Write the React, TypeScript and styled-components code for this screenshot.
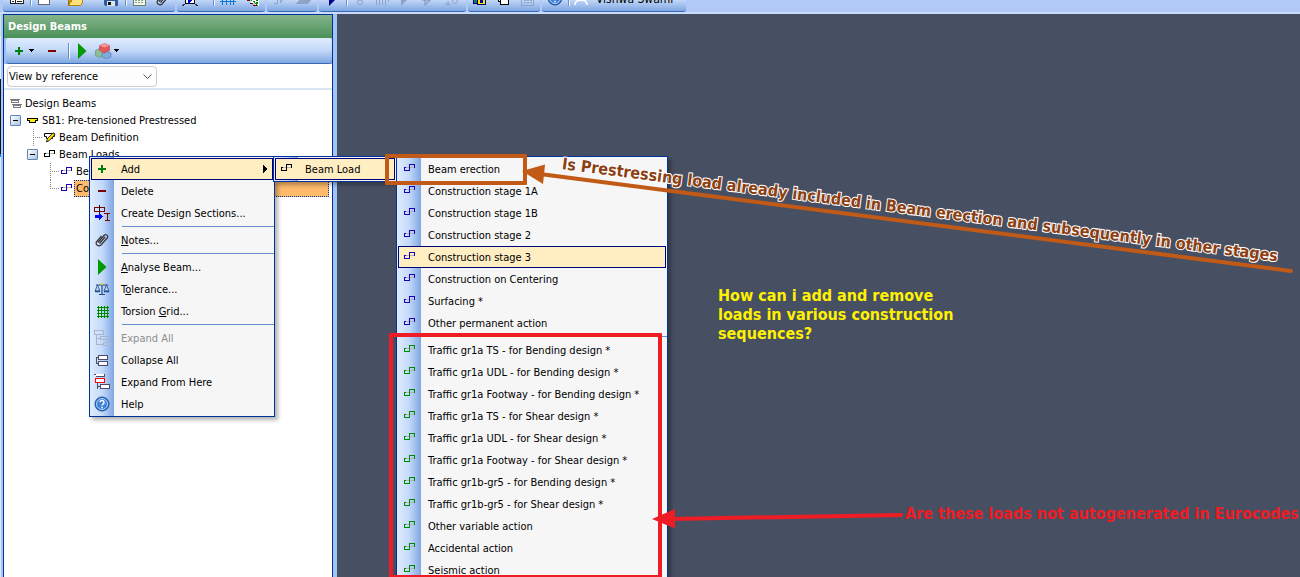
import React from "react";
import styled, { createGlobalStyle, css } from "styled-components";

const Global = createGlobalStyle`
  * { box-sizing: border-box; }
  body { margin: 0; }
  body, button, select {
    font-family: "DejaVu Sans Condensed", "DejaVu Sans", "Noto Sans", sans-serif;
    font-stretch: condensed;
    font-size: 11px;
    color: #000;
  }
  svg { display: block; flex: none; }
`;

const navy = "#00007f";
const frame = "#003399";
const orange = "#c05a16";
const red = "#ee1c24";

/* ---------- shell ---------- */

const Shell = styled.div`
  position: relative;
  display: flex;
  flex-direction: column;
  height: 100vh;
  overflow: hidden;
  background: #474f62;
`;

const TopBar = styled.header`
  display: flex;
  align-items: flex-end;
  gap: 2px;
  flex: none;
  height: 14px;
  padding: 0 3px 2px;
  overflow: hidden;
  background: linear-gradient(#b0c9f7 12px, #c9dcfb 12px);
`;

const ToolGroup = styled.div`
  display: flex;
  flex: none;
  height: 26px;
  padding-bottom: 5px;
  align-items: flex-end;
  border-bottom: 1px solid #3b68b5;
  border-radius: 0 0 3px 3px;
  background: linear-gradient(#dfecfe, #c2d8f8 55%, #7fa7e2);
`;

const ToolButton = styled.button<{ $w: number }>`
  display: flex;
  justify-content: center;
  align-items: flex-end;
  width: ${(p) => p.$w}px;
  padding: 0;
  border: 0;
  background: none;
`;

const Divider = styled.span<{ $h: number }>`
  width: 2px;
  height: ${(p) => p.$h}px;
  border-left: 1px solid #6a8ccb;
  border-right: 1px solid #f4f8ff;
`;

const UserName = styled.span`
  font-size: 12px;
  line-height: 14px;
  padding: 0 13px 0 4px;
`;

const Body = styled.div`
  display: flex;
  flex: 1;
  min-height: 0;
`;

const EdgeStrip = styled.div`
  flex: none;
  width: 3px;
  background:
    linear-gradient(#cfe6cf 22px, #e6efe6 22px 65px, #111 65px 140px, #1a6fff 140px 143px, #dce8fb 143px)
      0 0 / 1px 100% no-repeat,
    #a9c6f7;
`;

const Panel = styled.section`
  display: flex;
  flex-direction: column;
  flex: none;
  width: 330px;
  border: solid ${frame};
  border-width: 1px 1px 0;
  background: #fff;
`;

const Splitter = styled.div`
  flex: none;
  width: 4px;
  background: #a3c2f5;
`;

const Workspace = styled.main`
  flex: 1;
  background: #474f62;
`;

const PanelTitle = styled.h1`
  margin: 0;
  padding: 0 4px;
  font-size: 11px;
  line-height: 23px;
  color: #fff;
  background: linear-gradient(#86b48b, #4a9059);
`;

const PanelTools = styled.div`
  display: flex;
  align-items: center;
  height: 26px;
  padding-left: 2px;
  background: #9dbef5;
`;

const PanelToolsInner = styled.div`
  display: flex;
  align-items: center;
  flex: 1;
  height: 26px;
  padding-left: 5px;
  gap: 8px;
  border-bottom: 1px solid #3b68b5;
  border-radius: 3px;
  background: linear-gradient(#dfecfe, #c2d8f8 50%, #7fa7e2);
`;

const PanelButton = styled.button<{ $drop?: boolean }>`
  display: flex;
  align-items: center;
  gap: 2px;
  height: 22px;
  padding: 0 ${(p) => (p.$drop ? 2 : 0)}px 0 0;
  border: 0;
  background: none;
`;

const IconCell = styled.span`
  display: flex;
  justify-content: center;
  width: 16px;
`;

const ViewRow = styled.div`
  display: flex;
  height: 26px;
  padding: 2px 3px;
  border-bottom: 2px solid #d9e6f4;
`;

const SelectBox = styled.div`
  position: relative;
  width: 150px;
  svg { position: absolute; right: 5px; top: 8px; pointer-events: none; }
`;

const Select = styled.select`
  appearance: none;
  width: 100%;
  height: 21px;
  padding: 0 1px 1px;
  border: 1px solid #ccc;
  border-radius: 4px;
  background: #fdfdfd;
`;

/* ---------- tree ---------- */

const Tree = styled.ul`
  margin: 0;
  padding: 5px 0 0;
  list-style: none;
`;

const TreeRow = styled.li<{ $level: number }>`
  display: flex;
  align-items: center;
  height: 17px;
  padding: 0 3px 0 ${(p) => p.$level * 17 + 4}px;
`;

const TreeIcon = styled.span`
  display: flex;
  justify-content: center;
  width: 15px;
`;

const Branch = styled.span<{ $kind: "tee" | "end" | "box" }>`
  position: relative;
  display: flex;
  align-items: center;
  justify-content: center;
  width: 17px;
  height: 17px;
  ${(p) =>
    p.$kind !== "box" &&
    css`
      &::before {
        content: "";
        position: absolute;
        left: 8px;
        top: 0;
        height: ${p.$kind === "tee" ? 17 : 9}px;
        border-left: 1px dotted #888;
      }
      &::after {
        content: "";
        position: absolute;
        left: 8px;
        right: 0;
        top: 8px;
        border-top: 1px dotted #888;
      }
    `}
`;

const Expander = styled.button`
  display: flex;
  align-items: center;
  justify-content: center;
  width: 11px;
  height: 11px;
  padding: 0;
  margin-right: 2px;
  border: 1px solid #5f86b3;
  border-radius: 1px;
  background: linear-gradient(135deg, #fff, #a9c4e2);
`;

const TreeLabel = styled.span<{ $selected?: boolean }>`
  padding: 0 1px;
  line-height: 15px;
  white-space: nowrap;
  border: 1px solid transparent;
  ${(p) =>
    p.$selected &&
    css`
      flex: 1;
      border: 1px dotted #003399;
      background: #ffbb6b;
    `}
`;

/* ---------- menus ---------- */

const Menu = styled.div<{ $x: number; $y: number; $w: number }>`
  position: absolute;
  left: ${(p) => p.$x}px;
  top: ${(p) => p.$y}px;
  width: ${(p) => p.$w}px;
  padding: 1px;
  border: 1px solid ${frame};
  background: linear-gradient(90deg, #dfecfd, #c4dafa 50%, #7fa6e3) 0 0 / 24px 100% no-repeat #f6f6f6;
  box-shadow: 3px 3px 4px rgba(0, 0, 0, 0.3);
`;

const MenuItem = styled.button<{ $active?: boolean }>`
  display: flex;
  align-items: center;
  width: 100%;
  height: 22px;
  padding: 0 4px 0 2px;
  border: 1px solid ${(p) => (p.$active ? navy : "transparent")};
  background: ${(p) => (p.$active ? "#ffeec2" : "none")};
  text-align: left;
  white-space: nowrap;
  &:disabled { color: #8d8d8d; }
`;

const MenuIcon = styled.span`
  display: flex;
  align-items: center;
  justify-content: center;
  width: 16px;
  height: 20px;
  margin-right: 11px;
`;

const MenuText = styled.span`
  flex: 1;
`;

const Rule = styled.div`
  height: 5px;
  padding: 2px 0;
  margin: 0 -1px 0 31px;
  background: #6a8ccb content-box;
`;

/* ---------- annotations ---------- */

const Frame = styled.div<{ $x: number; $y: number; $w: number; $h: number; $c: string }>`
  position: absolute;
  left: ${(p) => p.$x}px;
  top: ${(p) => p.$y}px;
  width: ${(p) => p.$w}px;
  height: ${(p) => p.$h}px;
  border: 4px solid ${(p) => p.$c};
  border-radius: 1px;
`;

const Ink = styled.svg`
  position: absolute;
  left: 0;
  top: 0;
  pointer-events: none;
`;

const Note = styled.p<{ $x: number; $y: number; $c: string }>`
  position: absolute;
  left: ${(p) => p.$x}px;
  top: ${(p) => p.$y}px;
  margin: 0;
  font-weight: bold;
  font-size: 16px;
  line-height: 19px;
  white-space: pre;
  color: ${(p) => p.$c};
`;

const SlantedNote = styled(Note)`
  transform-origin: 0 100%;
  transform: rotate(7.36deg);
  -webkit-text-stroke: 2px #fff;
  paint-order: stroke fill;
`;

/* ---------- icons ---------- */

const Px = ({ w = 16, h = 16, children }: { w?: number; h?: number; children: React.ReactNode }) => (
  <svg width={w} height={h} viewBox={`0 0 ${w} ${h}`} shapeRendering="crispEdges" fill="none" aria-hidden="true">
    {children}
  </svg>
);

const Step = ({ c }: { c: string }) => (
  <Px w={11} h={10}>
    <path d="M1 3.5h9" stroke="#b4b4b4" />
    <path d="M.5 3v3.5h5V.5h5V4M0 3.5h2" stroke={c} />
  </Px>
);
const Plus = () => (
  <Px w={10} h={10}>
    <path d="M1 5h8M5 1v8" stroke="#007f0e" strokeWidth="2" />
  </Px>
);
const Minus = () => (
  <Px w={10} h={10}>
    <path d="M1 5h8" stroke="#7f0000" strokeWidth="2" />
  </Px>
);
const Dash = () => (
  <Px w={5} h={1}>
    <path d="M0 0h5v1h-5z" fill="#000" />
  </Px>
);
const Play = () => (
  <svg width="9" height="16" viewBox="0 0 9 16" aria-hidden="true">
    <path d="M0 0L8.500 8L0 16z" fill="#009a00" />
  </svg>
);
const Caret = () => (
  <Px w={5} h={3}>
    <path d="M0 0h5v1h-1v1h-1v1h-1v-1h-1v-1h-1z" fill="#000" />
  </Px>
);
const Cubes = () => (
  <svg width="17" height="16" viewBox="0 0 17 16" aria-hidden="true">
    <path d="M.5 7.500l4-2 4 2v5l-4 2-4-2z" fill="#8fbb99" stroke="#5d8a6b" strokeWidth=".6" />
    <path d="M7 10l5-2 4 2v4l-5 2-4-2z" fill="#7fabdb" stroke="#4a77ad" strokeWidth=".6" />
    <path d="M4.500 2.500l5-2 5 2v5l-5 2.500-5-2.500z" fill="#e4575c" stroke="#b8484d" strokeWidth=".6" />
    <path d="M4.500 2.500l5 2 5-2-5-2z" fill="#f59a9a" />
  </svg>
);
const Sections = () => (
  <Px w={16} h={17}>
    <path d="M.5 2.500h10v4h-10z" stroke="#7f0000" />
    <path d="M5.500 0v8" stroke="#3a0000" />
    <path d="M1 10h4V8l4 3.500L5 15v-2H1z" fill="#0000ff" />
    <path d="M10 8.500h6M11 15.500h5M13.500 8v8" stroke="#7f0000" />
  </Px>
);
const Clip = () => (
  <svg width="14" height="14" viewBox="0 0 14 14" fill="none" stroke="#333" strokeWidth="1.200" aria-hidden="true">
    <path d="M3 9.500L9 2.500a2 2 0 0 1 3.200 2.500L6 12a2.800 2.800 0 0 1-4.500-3.200L6.500 3M4.500 10.500L10 4" />
  </svg>
);
const Scales = () => (
  <svg width="16" height="14" viewBox="0 0 16 14" fill="none" stroke="#1d4e89" aria-hidden="true">
    <path d="M2 3h12M8 1v11M5 12.500h6" strokeWidth="1.200" />
    <path d="M3.500 3L1 9h5zM12.500 3L10 9h5z" fill="#b9d3ee" strokeWidth=".8" />
    <path d="M1 9.500h5M10 9.500h5" strokeWidth="1.400" />
    <path d="M7 1h2v2H7z" fill="#e6d400" stroke="none" />
  </svg>
);
const Grid = () => (
  <Px w={13} h={13}>
    <path d="M2.500 1v12M5.500 1v12M8.500 1v12M11.500 1v12M1 2.500h12M1 5.500h12M1 8.500h12M1 11.500h12" stroke="#008a00" />
  </Px>
);
const ExpandAll = () => (
  <Px w={17} h={16}>
    <path d="M.5.5h9v4h-9zM6.500 6.500h8v3h-8zM9.500 12.500h7v3h-7zM2.500 5v10M3 8.500h3M3 14.500h6" stroke="#a7b6cc" />
  </Px>
);
const CollapseAll = () => (
  <Px w={12} h={11}>
    <path d="M2.500.5h9v4h-9zM2.500 6.500h9v4h-9z" fill="#fff" stroke="#4a4a6a" />
    <path d="M.5 2v7M0 2.500h2M0 8.500h2" stroke="#4a4a6a" />
  </Px>
);
const ExpandHere = () => (
  <Px w={16} h={16}>
    <path d="M1 0h10v2h-10z" fill="#fff" />
    <path d="M0 .5h2M1.500 2.500h9V0M3.500 9v6M3 12.500h3" stroke="#4a4a6a" />
    <path d="M1.500 4.500h9v4h-9z" fill="#fff" stroke="#f00" />
    <path d="M6.500 10.500h9v4h-9z" fill="#fff" stroke="#4a4a6a" />
  </Px>
);
const Help = () => (
  <svg width="16" height="16" viewBox="0 0 16 16" aria-hidden="true">
    <circle cx="8" cy="8" r="7" fill="#2f74cc" stroke="#1d4f9c" />
    <circle cx="8" cy="8" r="5.500" fill="#3f83d8" stroke="#d7e8fb" strokeWidth=".8" />
    <path d="M6 6.300a2 2 0 1 1 2.700 2c-.6.300-.7.600-.7 1.200M8 10.800v1.400" fill="none" stroke="#fff" strokeWidth="1.500" />
  </svg>
);
const RootIcon = () => (
  <Px w={12} h={10}>
    <path d="M1.500 1.500h7v2h-7zM3.500 6.500h7v2h-7z" stroke="#7a7a7a" />
    <path d="M0 .5h10M2 5.500h10" stroke="#7a7a7a" />
  </Px>
);
const BeamIcon = () => (
  <Px w={11} h={5}>
    <path d="M.5.5h10v2h-10z" fill="#ffee00" stroke="#000" />
    <path d="M1 1h9v1h-9zM3 2h5v2h-5z" fill="#ffee00" />
    <path d="M2.500 3v1.500h6V3" stroke="#000" />
  </Px>
);
const DefinitionIcon = () => (
  <svg width="12" height="11" viewBox="0 0 12 11" aria-hidden="true">
    <path d="M.5 1.500h10v3h-2v2h-6v-2h-2z" fill="#fff" stroke="#000" />
    <path d="M2.500 10l1-3.500L9 .8l2 1.700-5.500 6z" fill="#ffd800" stroke="#000" strokeWidth=".8" />
  </svg>
);

const TopIcon = ({ name }: { name: string }) => {
  const gray = "#8fa3c4";
  switch (name) {
    case "window":
      return <Px><path d="M1.500 1.500h13v12h-13z" fill="#fff" stroke="#222" /><path d="M6.500 2v12M3 9.500h2M3 11.500h2M8 9.500h5M8 11.500h5" stroke="#222" /></Px>;
    case "new":
      return <Px><path d="M2.500 1.500h11v13h-11z" fill="#fff" stroke="#667" /></Px>;
    case "open":
      return <Px><path d="M.5 14.500V5l5-1 9 2-2 9z" fill="#d39a1c" stroke="#9a6a08" /><path d="M1 15l4-7h11l-3 7z" fill="#ffe27a" stroke="#b58012" /></Px>;
    case "save":
      return <Px><path d="M1 1h14v15h-13l-1-1z" fill="#2c5c99" /><path d="M4 11h8v5h-8z" fill="#dde4ec" /><path d="M5 12h3v3h-3z" fill="#111" /></Px>;
    case "calc":
      return <Px><path d="M2.500 1.500h12v14h-12z" fill="#f1f5ea" stroke="#6d806d" /><path d="M4 8.500h9M4 10.500h9M4 12.500h9" stroke="#8aa88a" strokeDasharray="2 1" /></Px>;
    case "clip":
      return <Clip />;
    case "select":
      return <Px><path d="M3.500 1.500h9v12h-9z" fill="#fff" stroke="#000" /><path d="M6 6l5 4-5 4z" fill="#0000d0" /><path d="M0 15.500h2M14 15.500h2M1 14.500h2M13 14.500h2" stroke="#333" /></Px>;
    case "bridge":
      return <Px><path d="M0 11.500h16M2.500 8v7M6.500 8v7M10.500 8v7M13.500 8v7" stroke="#0a78d0" /></Px>;
    case "check":
      return <Px><path d="M2 10l4 0 0 3 4 0 0 3 4 0V8" fill="#fff" /><path d="M2 10.500h3M5 13.500h3M8 15.500h4" stroke="#800000" /><path d="M6 9l7 6M12 9v6" stroke="#008a00" strokeWidth="2" strokeDasharray="2 1" /></Px>;
    case "flag":
      return <Px><path d="M2.500 5.500h4v8h-4M9.500 13V7h4l-4 6" stroke={gray} /></Px>;
    case "stack":
      return <Px w={18}><path d="M1 14l4-5h12l-4 5zM5 8l2-3h10l-2 3z" fill={gray} /></Px>;
    case "run":
      return <svg width="10" height="16" viewBox="0 0 10 16"><path d="M1 0l8 8-8 8z" fill="#00008b" /></svg>;
    case "ring":
      return <svg width="16" height="16" viewBox="0 0 16 16" fill="none" stroke={gray}><circle cx="8" cy="12" r="2.500" /><path d="M5 10h6" /></svg>;
    case "wave":
      return <Px><path d="M1.500 6v9M4.500 8v7M7.500 8v7M10.500 8v7M13.500 8v4" stroke={gray} /></Px>;
    case "runOff":
      return <svg width="10" height="16" viewBox="0 0 10 16"><path d="M1 0l8 8-8 8z" fill={gray} /></svg>;
    case "pen":
      return <svg width="16" height="16" viewBox="0 0 16 16" fill="none" stroke={gray} strokeWidth="1.500"><path d="M3 10h8l-5 5V9" /></svg>;
    case "link":
      return <svg width="16" height="16" viewBox="0 0 16 16" fill="none" stroke={gray}><path d="M1 14h6M4 11v5" /><circle cx="11" cy="11" r="2.500" /></svg>;
    case "layers":
      return <Px><path d="M1.500 5.500h7v8h-7z" fill="#1a7a5a" stroke="#00007f" /><path d="M5.500 7.500h8v7h-8z" fill="#ffe600" stroke="#00007f" /><path d="M8 10h3v3h-3z" fill="#00a" /></Px>;
    case "windows":
      return <Px><path d="M3.500 4.500h7v7h-7z" fill="#fff" stroke="#000" /><path d="M5.500 7.500h8v7h-8z" fill="#fff" stroke="#000" /><path d="M6 8.500h8" stroke="#000" /></Px>;
    case "table":
      return <Px><path d="M2.500 1.500h12v14h-12z" stroke={gray} /><path d="M5 10.500h8M5 12.500h8" stroke={gray} strokeDasharray="2 1" /></Px>;
    case "help":
      return <Help />;
    default:
      return <svg width="16" height="16" viewBox="0 0 16 16" fill="none" stroke="#fff" strokeWidth="1.500"><circle cx="8" cy="6" r="4" /><path d="M2 15c0-4 3-5 6-5s6 1 6 5" /></svg>;
  }
};

/* ---------- data ---------- */

type Tool = [string, number] | "|";
const toolGroups: Tool[][] = [
  [["window", 27], "|", ["new", 23], ["open", 42], ["save", 28], "|", ["calc", 24], ["clip", 24]],
  [["select", 26], ["", 10], "|", ["bridge", 26], ["check", 24]],
  [["flag", 24], ["stack", 26]],
  [["run", 27], "|", ["ring", 24], ["wave", 22], ["runOff", 22], ["pen", 22], ["link", 28]],
  [["layers", 24], ["windows", 22], ["table", 26]],
  [["help", 26], "|", ["user", 22]],
];

type Entry = { icon?: React.ReactNode; text: React.ReactNode; off?: boolean; on?: boolean; more?: boolean } | "-";

const actions: Entry[] = [
  { icon: <Plus />, text: "Add", on: true, more: true },
  { icon: <Minus />, text: "Delete" },
  { icon: <Sections />, text: "Create Design Sections..." },
  "-",
  { icon: <Clip />, text: <><u>N</u>otes...</> },
  "-",
  { icon: <Play />, text: <><u>A</u>nalyse Beam...</> },
  { icon: <Scales />, text: <>T<u>o</u>lerance...</> },
  { icon: <Grid />, text: <>Torsion <u>G</u>rid...</> },
  "-",
  { icon: <ExpandAll />, text: "Expand All", off: true },
  { icon: <CollapseAll />, text: "Collapse All" },
  { icon: <ExpandHere />, text: "Expand From Here" },
  { icon: <Help />, text: "Help" },
];

const blue = "#1a00b8";
const green = "#008a00";

const stages: Entry[] = [
  ...["Beam erection", "Construction stage 1A", "Construction stage 1B", "Construction stage 2", "Construction stage 3",
    "Construction on Centering", "Surfacing *", "Other permanent action",
  ].map((text) => ({ icon: <Step c={blue} />, text, on: text === "Construction stage 3" })),
  "-",
  ...["Traffic gr1a TS - for Bending design *", "Traffic gr1a UDL - for Bending design *",
    "Traffic gr1a Footway - for Bending design *", "Traffic gr1a TS - for Shear design *",
    "Traffic gr1a UDL - for Shear design *", "Traffic gr1a Footway - for Shear design *",
    "Traffic gr1b-gr5 - for Bending design *", "Traffic gr1b-gr5 - for Shear design *",
    "Other variable action", "Accidental action", "Seismic action",
  ].map((text) => ({ icon: <Step c={green} />, text })),
];

const PopupMenu = ({ x, y, w, label, entries }: { x: number; y: number; w: number; label: string; entries: Entry[] }) => (
  <Menu $x={x} $y={y} $w={w} role="menu" aria-label={label}>
    {entries.map((e, i) =>
      e === "-" ? (
        <Rule key={i} role="separator" />
      ) : (
        <MenuItem key={i} role="menuitem" $active={e.on} disabled={e.off}>
          <MenuIcon>{e.icon}</MenuIcon>
          <MenuText>{e.text}</MenuText>
          {e.more && <Px w={5} h={8}><path d="M0 0h1v1h1v1h1v1h1v2h-1v1h-1v1h-1v1h-1z" fill="#000" /></Px>}
        </MenuItem>
      )
    )}
  </Menu>
);

export default function App() {
  return (
    <Shell>
      <Global />
      <TopBar>
        {toolGroups.map((group, g) => (
          <ToolGroup key={g}>
            {group.map((t, i) =>
              t === "|" ? <Divider key={i} $h={18} /> : (
                <ToolButton key={i} $w={t[1]} aria-label={t[0] || "more"}>{t[0] && <TopIcon name={t[0]} />}</ToolButton>
              )
            )}
            {g === 5 && <UserName>Vishwa Swami</UserName>}
          </ToolGroup>
        ))}
      </TopBar>

      <Body>
        <EdgeStrip />
        <Panel>
          <PanelTitle>Design Beams</PanelTitle>
          <PanelTools>
            <PanelToolsInner>
              <PanelButton $drop aria-label="Add"><IconCell><Plus /></IconCell><Caret /></PanelButton>
              <PanelButton aria-label="Remove"><IconCell><Minus /></IconCell></PanelButton>
              <Divider $h={16} />
              <PanelButton aria-label="Analyse"><Play /></PanelButton>
              <PanelButton $drop aria-label="Model view"><Cubes /><Caret /></PanelButton>
            </PanelToolsInner>
          </PanelTools>
          <ViewRow>
            <SelectBox>
              <Select aria-label="View" defaultValue="ref">
                <option value="ref">View by reference</option>
              </Select>
              <svg width="9" height="6" viewBox="0 0 9 6" fill="none" stroke="#555"><path d="M.5.5l4 4 4-4" /></svg>
            </SelectBox>
          </ViewRow>
          <Tree>
            <TreeRow $level={0}><TreeIcon><RootIcon /></TreeIcon><TreeLabel>Design Beams</TreeLabel></TreeRow>
            <TreeRow $level={0}>
              <Branch $kind="box"><Expander aria-label="Collapse"><Dash /></Expander></Branch>
              <TreeIcon><BeamIcon /></TreeIcon><TreeLabel>SB1: Pre-tensioned Prestressed</TreeLabel>
            </TreeRow>
            <TreeRow $level={1}><Branch $kind="tee" /><TreeIcon><DefinitionIcon /></TreeIcon><TreeLabel>Beam Definition</TreeLabel></TreeRow>
            <TreeRow $level={1}>
              <Branch $kind="box"><Expander aria-label="Collapse"><Dash /></Expander></Branch>
              <TreeIcon><Step c="#000" /></TreeIcon><TreeLabel>Beam Loads</TreeLabel>
            </TreeRow>
            <TreeRow $level={2}><Branch $kind="tee" /><TreeIcon><Step c={blue} /></TreeIcon><TreeLabel>Beam erection</TreeLabel></TreeRow>
            <TreeRow $level={2}><Branch $kind="end" /><TreeIcon><Step c={blue} /></TreeIcon><TreeLabel $selected>Construction stage 1A</TreeLabel></TreeRow>
          </Tree>
        </Panel>
        <Splitter />
        <Workspace />
      </Body>

      <PopupMenu x={89} y={156} w={186} label="Beam loads" entries={actions} />
      <PopupMenu x={273} y={156} w={124} label="Add" entries={[{ icon: <Step c="#000" />, text: "Beam Load", on: true, more: true }]} />
      <PopupMenu x={396} y={156} w={272} label="Beam load" entries={stages} />

      <Frame $x={385} $y={154} $w={142} $h={31} $c={orange} />
      <Frame $x={389} $y={333} $w={273} $h={246} $c={red} />
      <Ink width="1300" height="577" viewBox="0 0 1300 577" aria-hidden="true">
        <path d="M540 174L1291 271" stroke={orange} strokeWidth="4" strokeLinecap="round" />
        <path d="M522 171L545 164.500L543 184z" fill={orange} />
        <path d="M670 519L901 515" stroke={red} strokeWidth="4" strokeLinecap="round" />
        <path d="M652 519L675 509V528.500z" fill={red} />
      </Ink>
      <SlantedNote $x={561} $y={154} $c="#8c4012">Is Prestressing load already included in Beam erection and subsequently in other stages</SlantedNote>
      <Note $x={718} $y={286} $c="#fff200">{"How can i add and remove\nloads in various construction\nsequences?"}</Note>
      <Note $x={905} $y={504} $c={red}>Are these loads not autogenerated in Eurocodes</Note>
    </Shell>
  );
}
